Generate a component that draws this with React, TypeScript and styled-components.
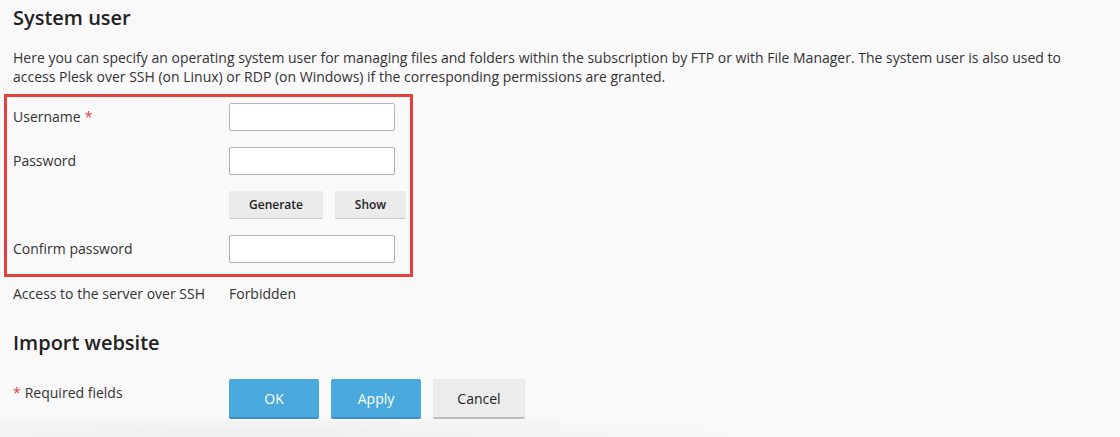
import * as React from "react";
import styled, { createGlobalStyle } from "styled-components";

const GlobalStyle = createGlobalStyle`
  html, body {
    margin: 0;
    padding: 0;
    background: #f9f9f9;
  }
  body {
    font-family: "Open Sans", "Liberation Sans", sans-serif;
    color: #333;
    font-size: 14px;
  }
`;

const Page = styled.div`
  position: relative;
  width: 1120px;
  height: 437px;
  padding: 0 13px;
  box-sizing: border-box;
  overflow: hidden;
`;

const Heading = styled.h2<{ $top: number }>`
  margin: 0;
  padding-top: ${(p) => p.$top}px;
  font-size: 20px;
  line-height: 26px;
  font-weight: 600;
  color: #222;
`;

const Description = styled.p`
  margin: 17px 0 0;
  font-size: 14px;
  line-height: 19px;
  color: #333;
`;

const Highlight = styled.div`
  margin: 8px 0 0 -9px;
  width: 409px;
  box-sizing: border-box;
  border: 3px solid #e5403a;
  padding: 6px 6px 11px;
  display: flex;
  flex-direction: column;
  gap: 16px;
`;

const Row = styled.div`
  display: grid;
  grid-template-columns: 216px auto;
  align-items: center;
  min-height: 28px;
`;

const Label = styled.label`
  font-size: 14px;
  line-height: 20px;
  color: #333;
`;

const Required = styled.span`
  color: #e23d4a;
  margin-left: 4px;
`;

const TextInput = styled.input`
  width: 166px;
  height: 28px;
  box-sizing: border-box;
  border: 1px solid #b5b5b5;
  border-radius: 2px;
  background: #fff;
  padding: 0 6px;
  font: inherit;
`;

const InlineButtons = styled.div`
  display: flex;
  gap: 12px;
`;

const SmallButton = styled.button<{ $width: number }>`
  width: ${(p) => p.$width}px;
  height: 28px;
  box-sizing: border-box;
  border: none;
  border-bottom: 1px solid #c8c8c8;
  border-radius: 2px;
  background: #ebebeb;
  color: #222;
  font-family: inherit;
  font-size: 12px;
  font-weight: 600;
  padding: 0;
`;

const InfoRow = styled.div`
  display: grid;
  grid-template-columns: 216px auto;
  margin-top: 7px;
  font-size: 14px;
  line-height: 20px;
`;

const Value = styled.span`
  color: #333;
`;

const ActionsRow = styled.div`
  display: grid;
  grid-template-columns: 216px auto;
  align-items: start;
  margin-top: 23px;
`;

const Note = styled.div`
  padding-top: 4px;
  font-size: 14px;
  line-height: 20px;
  color: #333;
`;

const NoteStar = styled.span`
  color: #e23d4a;
  margin-right: 4px;
`;

const Actions = styled.div`
  display: flex;
  gap: 12px;
`;

const ActionButton = styled.button<{ $primary?: boolean; $width: number }>`
  width: ${(p) => p.$width}px;
  height: 40px;
  box-sizing: border-box;
  border: none;
  border-bottom: 2px solid ${(p) => (p.$primary ? "#3b8fc4" : "#bdbdbd")};
  border-radius: 2px;
  background: ${(p) => (p.$primary ? "#4aaadd" : "#ececec")};
  color: ${(p) => (p.$primary ? "#fff" : "#222")};
  font-family: inherit;
  font-size: 14px;
  font-weight: 400;
  padding: 0;
`;

const Shade = styled.div`
  position: absolute;
  left: 0;
  right: 0;
  bottom: 0;
  height: 17px;
  background: radial-gradient(
    ellipse 560px 30px at 250px 100%,
    rgba(0, 0, 0, 0.045),
    rgba(0, 0, 0, 0) 100%
  );
  pointer-events: none;
`;

export default function App() {
  return (
    <>
      <GlobalStyle />
      <Page>
        <Heading $top={5}>System user</Heading>
        <Description>
          Here you can specify an operating system user for managing files and
          folders within the subscription by FTP or with File Manager. The
          system user is also used to
          <br />
          access Plesk over SSH (on Linux) or RDP (on Windows) if the
          corresponding permissions are granted.
        </Description>

        <Highlight>
          <Row>
            <Label>
              Username<Required>*</Required>
            </Label>
            <TextInput type="text" />
          </Row>
          <Row>
            <Label>Password</Label>
            <TextInput type="password" />
          </Row>
          <Row>
            <span />
            <InlineButtons>
              <SmallButton $width={94}>Generate</SmallButton>
              <SmallButton $width={71}>Show</SmallButton>
            </InlineButtons>
          </Row>
          <Row>
            <Label>Confirm password</Label>
            <TextInput type="password" />
          </Row>
        </Highlight>

        <InfoRow>
          <span>Access to the server over SSH</span>
          <Value>Forbidden</Value>
        </InfoRow>

        <Heading $top={26}>Import website</Heading>

        <ActionsRow>
          <Note>
            <NoteStar>*</NoteStar>Required fields
          </Note>
          <Actions>
            <ActionButton $primary $width={90}>
              OK
            </ActionButton>
            <ActionButton $primary $width={90}>
              Apply
            </ActionButton>
            <ActionButton $width={92}>Cancel</ActionButton>
          </Actions>
        </ActionsRow>
        <Shade />
      </Page>
    </>
  );
}
